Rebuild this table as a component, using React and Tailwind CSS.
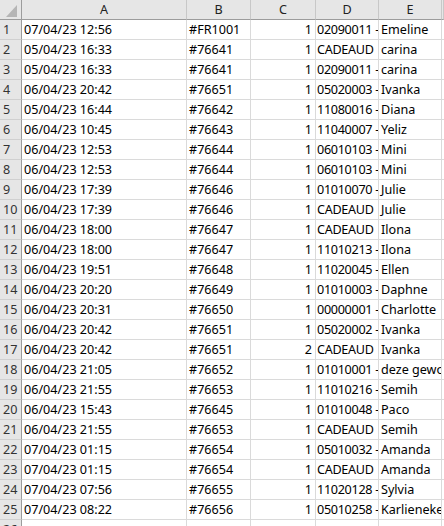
import React from "react";

const rows = [
  ["07/04/23 12:56", "#FR1001", "1", "02090011 -", "Emeline"],
  ["05/04/23 16:33", "#76641", "1", "CADEAUD", "carina"],
  ["05/04/23 16:33", "#76641", "1", "02090011 -", "carina"],
  ["06/04/23 20:42", "#76651", "1", "05020003 -", "Ivanka"],
  ["05/04/23 16:44", "#76642", "1", "11080016 -", "Diana"],
  ["06/04/23 10:45", "#76643", "1", "11040007 -", "Yeliz"],
  ["06/04/23 12:53", "#76644", "1", "06010103 -", "Mini"],
  ["06/04/23 12:53", "#76644", "1", "06010103 -", "Mini"],
  ["06/04/23 17:39", "#76646", "1", "01010070 -", "Julie"],
  ["06/04/23 17:39", "#76646", "1", "CADEAUD", "Julie"],
  ["06/04/23 18:00", "#76647", "1", "CADEAUD", "Ilona"],
  ["06/04/23 18:00", "#76647", "1", "11010213 -", "Ilona"],
  ["06/04/23 19:51", "#76648", "1", "11020045 -", "Ellen"],
  ["06/04/23 20:20", "#76649", "1", "01010003 -", "Daphne"],
  ["06/04/23 20:31", "#76650", "1", "00000001 -", "Charlotte"],
  ["06/04/23 20:42", "#76651", "1", "05020002 -", "Ivanka"],
  ["06/04/23 20:42", "#76651", "2", "CADEAUD", "Ivanka"],
  ["06/04/23 21:05", "#76652", "1", "01010001 -", "deze gewone"],
  ["06/04/23 21:55", "#76653", "1", "11010216 -", "Semih"],
  ["06/04/23 15:43", "#76645", "1", "01010048 -", "Paco"],
  ["06/04/23 21:55", "#76653", "1", "CADEAUD", "Semih"],
  ["07/04/23 01:15", "#76654", "1", "05010032 -", "Amanda"],
  ["07/04/23 01:15", "#76654", "1", "CADEAUD", "Amanda"],
  ["07/04/23 07:56", "#76655", "1", "11020128 -", "Sylvia"],
  ["07/04/23 08:22", "#76656", "1", "05010258 -", "Karlieneke"],
];

const grid = "grid grid-cols-[22px_165px_64px_65px_63px_63px_1fr]";
const cell =
  "h-[20px] border-r border-b border-[#dadada] px-[2px] leading-[19px] overflow-hidden whitespace-nowrap text-[#000]";
const rowHead =
  "h-[20px] bg-[#e6e6e6] border-r border-r-[#9c9c9c] border-b border-b-[#d0d0d0] pl-[3px] leading-[19px] text-[#333] overflow-hidden whitespace-nowrap";
const colHead =
  "h-[20px] bg-[#e6e6e6] border-r border-r-[#c8c8c8] border-b border-b-[#9c9c9c] text-center leading-[19px] text-[#222]";

export default function App() {
  return (
    <div
      className="w-[444px] h-[526px] overflow-hidden bg-white text-[12.6px]"
      style={{ fontFamily: '"Noto Sans", "Open Sans", sans-serif' }}
    >
      <div className={grid}>
        <div className="h-[20px] bg-[#e6e6e6] border-r border-r-[#9c9c9c] border-b border-b-[#9c9c9c] relative">
          <svg width="21" height="19" className="absolute left-0 top-0">
            <polygon points="17,5 17,17 6,17" fill="#b5b5b5" />
          </svg>
        </div>
        {["A", "B", "C", "D", "E", ""].map((l, i) => (
          <div key={i} className={colHead}>
            {l}
          </div>
        ))}
      </div>
      {rows.map((r, i) => (
        <div key={i} className={grid}>
          <div className={rowHead}>{i + 1}</div>
          <div className={cell}>{r[0]}</div>
          <div className={cell}>{r[1]}</div>
          <div className={cell + " text-right pr-[3px]"}>{r[2]}</div>
          <div className={cell + " pl-[1px] tracking-[-0.3px]"}>{r[3]}</div>
          <div className={cell}>{r[4]}</div>
          <div className={cell}></div>
        </div>
      ))}
      <div className={grid}>
        <div className={rowHead}>26</div>
        <div className={cell}></div>
        <div className={cell}></div>
        <div className={cell}></div>
        <div className={cell}></div>
        <div className={cell}></div>
        <div className={cell}></div>
      </div>
    </div>
  );
}
